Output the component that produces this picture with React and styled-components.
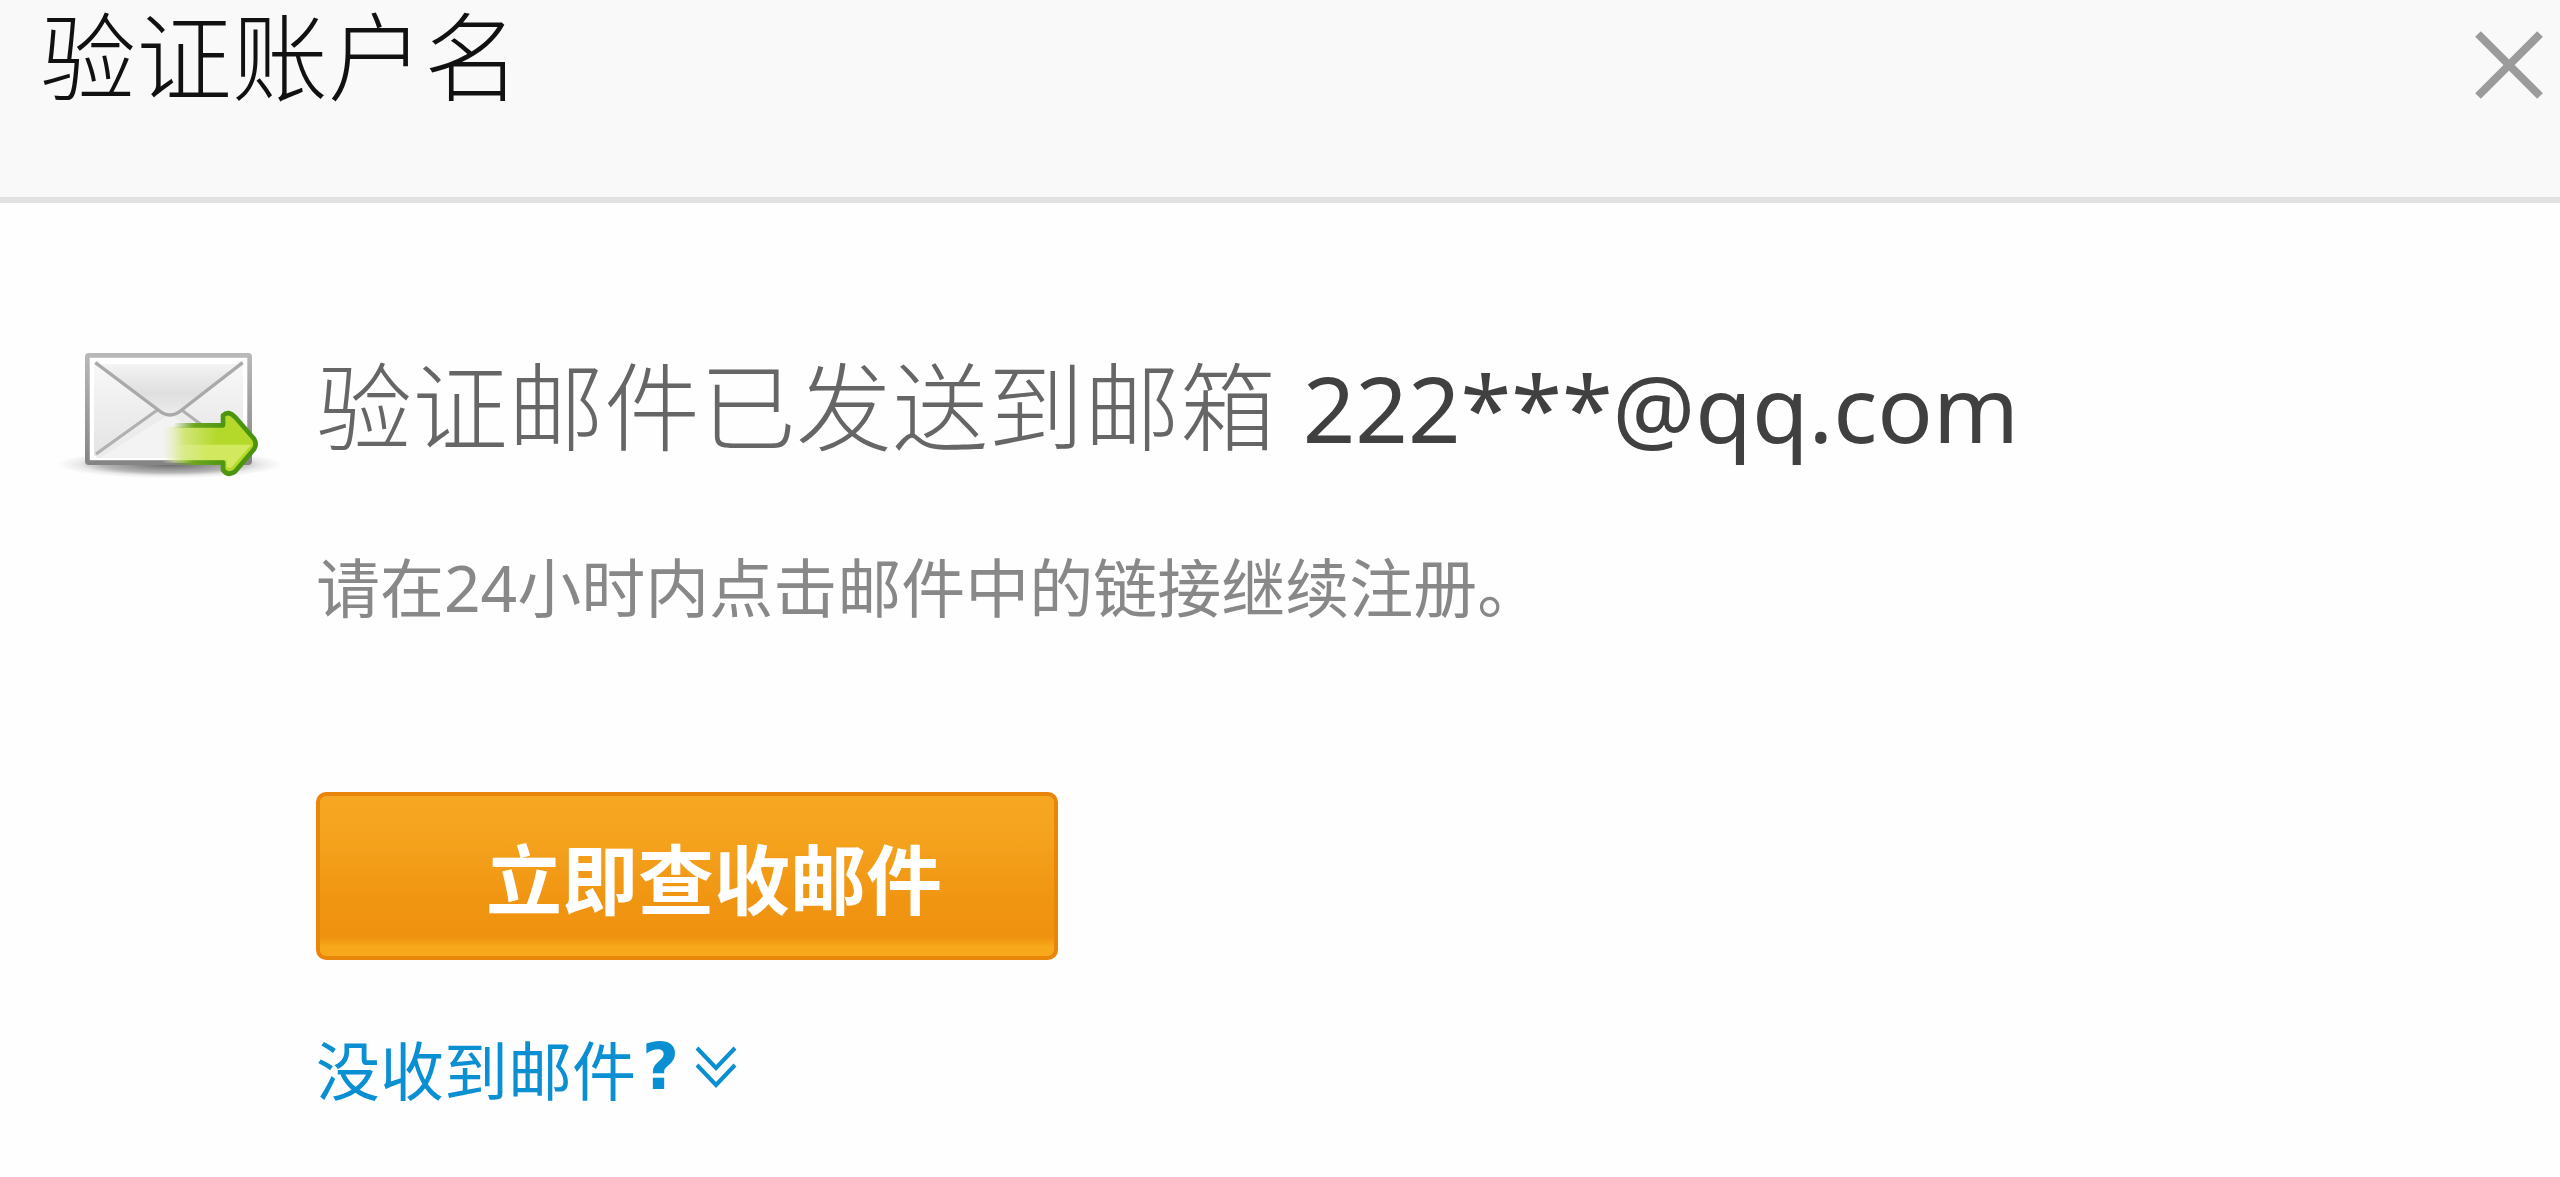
import { useState } from 'react';
import styled, { createGlobalStyle } from 'styled-components';

const cjk = `'Noto Sans CJK SC', sans-serif`;
const body = `'Liberation Sans', ${cjk}`;
const latin = `'Noto Sans', ${cjk}`;

const GlobalStyle = createGlobalStyle`
    * {
        box-sizing: border-box;
    }
    body {
        margin: 0;
        background-color: #fefefe;
        font-family: ${body};
    }
`;

const DialogHeader = styled.header`
    display: flex;
    align-items: flex-start;
    justify-content: space-between;
    padding: 0 16px 77px 40px;
    background-color: #f9f9f9;
    border-bottom: 6px solid #e1e1e1;
`;

const DialogTitle = styled.h1`
    margin: 0;
    color: #111;
    font-size: 96px;
    font-weight: 300;
    line-height: 120px;
`;

const CloseButton = styled.button`
    display: flex;
    margin-top: 30px;
    padding: 0;
    border: none;
    background: none;
    cursor: pointer;
`;

const DialogContent = styled.main`
    display: flex;
    align-items: flex-start;
    gap: 26px;
    padding: 127px 50px 60px;
`;

const Message = styled.section`
    display: flex;
    flex: 1;
    flex-direction: column;
    align-items: flex-start;
`;

const MessageTitle = styled.h2`
    margin: 0;
    color: #666;
    font-size: 96px;
    font-weight: 300;
    line-height: 160px;
`;

const Email = styled.span`
    color: #404040;
    font-family: ${latin};
    font-size: 92px;
    font-weight: 400;
    line-height: 1;
`;

const MessageText = styled.p`
    margin: 52px 0 0;
    color: #888;
    font-size: 64px;
    line-height: 96px;
`;

const Digits = styled.span`
    font-family: ${latin};
    line-height: 1;
`;

const SubmitButton = styled.button`
    margin-top: 154px;
    padding: 0 112px 0 166px;
    height: 168px;
    border: 4px solid #e8850b;
    border-radius: 10px;
    background-image: linear-gradient(#f6a722, #f5a31e 25%, #f09512 65%, #ef920f 88%, #f7a81b 94%);
    color: white;
    font-family: ${cjk};
    font-size: 76px;
    font-weight: 700;
    line-height: 112px;
    cursor: pointer;
`;

const HelpLink = styled.a`
    display: flex;
    align-items: center;
    margin-top: 59px;
    color: #0a8fd2;
    font-family: ${cjk};
    font-size: 64px;
    line-height: 96px;
    text-decoration: none;
`;

const QuestionMark = styled.span`
    margin: 0 16px 0 6px;
    font-family: 'DejaVu Sans', sans-serif;
    font-weight: 700;
`;

function CloseIcon() {
    return (
        <svg width="70" height="70" viewBox="0 0 70 70" fill="none" stroke="#9b9b9b" strokeWidth="8" aria-hidden="true">
            <path d="M4 4 66 66M66 4 4 66" />
        </svg>
    );
}

function MailSentIcon() {
    return (
        <svg width="240" height="170" viewBox="0 0 720 510" aria-hidden="true">
            <defs>
                <radialGradient id="shadow">
                    <stop offset="0" stopColor="#000" stopOpacity="0.6" />
                    <stop offset="0.6" stopColor="#000" stopOpacity="0.28" />
                    <stop offset="0.8" stopColor="#000" stopOpacity="0.08" />
                    <stop offset="1" stopColor="#000" stopOpacity="0" />
                </radialGradient>
                <linearGradient id="paper" x2="0" y2="1">
                    <stop offset="0" stopColor="#fafafa" />
                    <stop offset="1" stopColor="#e2e2e2" />
                </linearGradient>
                <linearGradient id="flap" x2="0" y2="1">
                    <stop offset="0" stopColor="#f6f6f6" />
                    <stop offset="0.6" stopColor="#dfdfdf" />
                    <stop offset="1" stopColor="#ececec" />
                </linearGradient>
                <linearGradient id="frame" x2="0" y2="1">
                    <stop offset="0" stopColor="#b8b8b8" />
                    <stop offset="1" stopColor="#858585" />
                </linearGradient>
                <linearGradient id="arrow" gradientUnits="userSpaceOnUse" x1="335" x2="500" y1="0" y2="0">
                    <stop offset="0" stopColor="#e4edc0" stopOpacity="0" />
                    <stop offset="0.4" stopColor="#d2e67a" />
                    <stop offset="1" stopColor="#b4d92b" />
                </linearGradient>
                <linearGradient id="arrowEdge" gradientUnits="userSpaceOnUse" x1="370" x2="530" y1="0" y2="0">
                    <stop offset="0" stopColor="#5f9e14" stopOpacity="0" />
                    <stop offset="0.4" stopColor="#6ea51c" />
                    <stop offset="1" stopColor="#4c9410" />
                </linearGradient>
                <linearGradient id="arrowShine" gradientUnits="userSpaceOnUse" x1="350" x2="470" y1="0" y2="0">
                    <stop offset="0" stopColor="#f0f6cf" stopOpacity="0" />
                    <stop offset="1" stopColor="#d2e95f" />
                </linearGradient>
            </defs>
            <ellipse cx="360" cy="403" rx="340" ry="42" fill="url(#shadow)" />
            <rect x="112" y="76" width="487" height="322" rx="4" fill="url(#paper)" stroke="url(#frame)" strokeWidth="14" />
            <rect x="126" y="90" width="459" height="294" fill="none" stroke="#fff" strokeWidth="12" />
            <path d="M134 384 325 240 395 240 585 384Z" fill="#ececec" />
            <path d="M150 384 345 262 375 262 560 384Z" fill="#f9f9f9" opacity="0.6" />
            <path d="M128 92 325 240Q360 270 395 240L584 92Z" fill="url(#flap)" />
            <path d="M150 96H562" stroke="#fff" strokeWidth="12" />
            <path d="M138 372 322 240M395 240 580 378" fill="none" stroke="#b0b0b0" strokeWidth="9" />
            <path d="M136 98 325 240Q360 270 395 240L578 98" fill="none" stroke="#a9a9a9" strokeWidth="10" />
            <path d="M340 290H517V256Q535 240 556 262L612 326Q622 342 612 358L556 424Q535 440 517 420V398H340Z" fill="url(#arrow)" />
            <path d="M340 344H604L548 408Q538 418 530 410V390H340Z" fill="url(#arrowShine)" />
            <path
                d="M370 286H519V256Q535 240 556 262L612 326Q622 342 612 358L556 424Q535 440 519 420V398H370"
                fill="none"
                stroke="url(#arrowEdge)"
                strokeWidth="14"
                strokeLinejoin="round"
            />
        </svg>
    );
}

function DoubleChevronIcon() {
    return (
        <svg width="42" height="44" viewBox="0 0 42 44" fill="none" stroke="currentColor" strokeWidth="4" aria-hidden="true">
            <path d="M2 3 21 23 40 3M2 20 21 40 40 20" />
        </svg>
    );
}

export default function App() {
    const [open, setOpen] = useState(true);
    if (!open) return <GlobalStyle />;
    return <>
        <GlobalStyle />
        <DialogHeader>
            <DialogTitle>验证账户名</DialogTitle>
            <CloseButton type="button" aria-label="关闭" onClick={() => setOpen(false)}>
                <CloseIcon />
            </CloseButton>
        </DialogHeader>
        <DialogContent>
            <MailSentIcon />
            <Message>
                <MessageTitle>
                    验证邮件已发送到邮箱 <Email>222***@qq.com</Email>
                </MessageTitle>
                <MessageText>
                    请在<Digits>24</Digits>小时内点击邮件中的链接继续注册。
                </MessageText>
                <SubmitButton type="button">立即查收邮件</SubmitButton>
                <HelpLink href="#help">
                    没收到邮件<QuestionMark>?</QuestionMark>
                    <DoubleChevronIcon />
                </HelpLink>
            </Message>
        </DialogContent>
    </>
}
